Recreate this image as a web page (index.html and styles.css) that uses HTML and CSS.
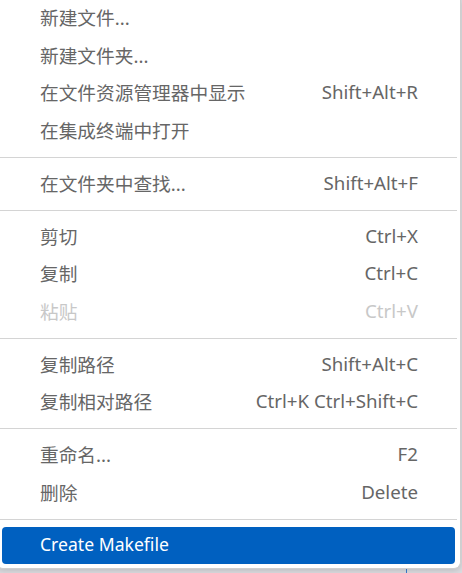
FILE: index.html
```html
<!DOCTYPE html>
<html lang="zh-CN">
<head>
<meta charset="utf-8">
<title>Context menu</title>
<link rel="stylesheet" href="styles.css">
</head>
<body>
<div class="editor-line"></div>
<div class="menu">
  <div class="item"><span class="label">新建文件...</span></div>
  <div class="item"><span class="label">新建文件夹...</span></div>
  <div class="item"><span class="label">在文件资源管理器中显示</span><span class="key">Shift+Alt+R</span></div>
  <div class="item"><span class="label">在集成终端中打开</span></div>
  <div class="sep"></div>
  <div class="item"><span class="label">在文件夹中查找...</span><span class="key">Shift+Alt+F</span></div>
  <div class="sep"></div>
  <div class="item"><span class="label">剪切</span><span class="key">Ctrl+X</span></div>
  <div class="item"><span class="label">复制</span><span class="key">Ctrl+C</span></div>
  <div class="item disabled"><span class="label">粘贴</span><span class="key">Ctrl+V</span></div>
  <div class="sep"></div>
  <div class="item"><span class="label">复制路径</span><span class="key">Shift+Alt+C</span></div>
  <div class="item"><span class="label">复制相对路径</span><span class="key">Ctrl+K Ctrl+Shift+C</span></div>
  <div class="sep"></div>
  <div class="item"><span class="label">重命名...</span><span class="key">F2</span></div>
  <div class="item"><span class="label">删除</span><span class="key">Delete</span></div>
  <div class="sep"></div>
  <div class="item active"><span class="label latin">Create Makefile</span></div>
</div>
</body>
</html>
```
FILE: styles.css
```css
html, body {
  margin: 0;
  padding: 0;
}
body {
  width: 462px;
  height: 573px;
  overflow: hidden;
  position: relative;
  background: #dcdce0;
  font-family: "Noto Sans", "Noto Sans CJK SC", sans-serif;
  font-size: 18.7px;
}
.editor-line {
  position: absolute;
  left: 406px;
  top: 560px;
  width: 1px;
  height: 13px;
  background: #3a7bd0;
}
.menu {
  position: relative;
  margin: -0.75px 0 0 -4px;
  width: 465px;
  box-sizing: border-box;
  background: #ffffff;
  border: 1px solid #cfcfcf;
  border-top: none;
  border-radius: 0 0 7px 7px;
  padding: 0 5px 4px;
  box-shadow: 0 2px 6px rgba(0, 0, 0, 0.14);
}
.item {
  height: 37.5px;
  box-sizing: border-box;
  padding: 0 37px 3px 38px;
  display: flex;
  align-items: center;
  border-radius: 4px;
  color: #666666;
  white-space: nowrap;
}
.label {
  flex: 1;
}
.latin {
  font-size: 17.6px;
}
.key {
  font-size: 18.7px;
}
.item.disabled {
  color: #c8c8c8;
}
.item.active {
  background: #0060c0;
  color: #ffffff;
}
.sep {
  height: 1px;
  background: #d4d4d4;
  margin: 7.25px -2px 7.25px -6px;
}
```
